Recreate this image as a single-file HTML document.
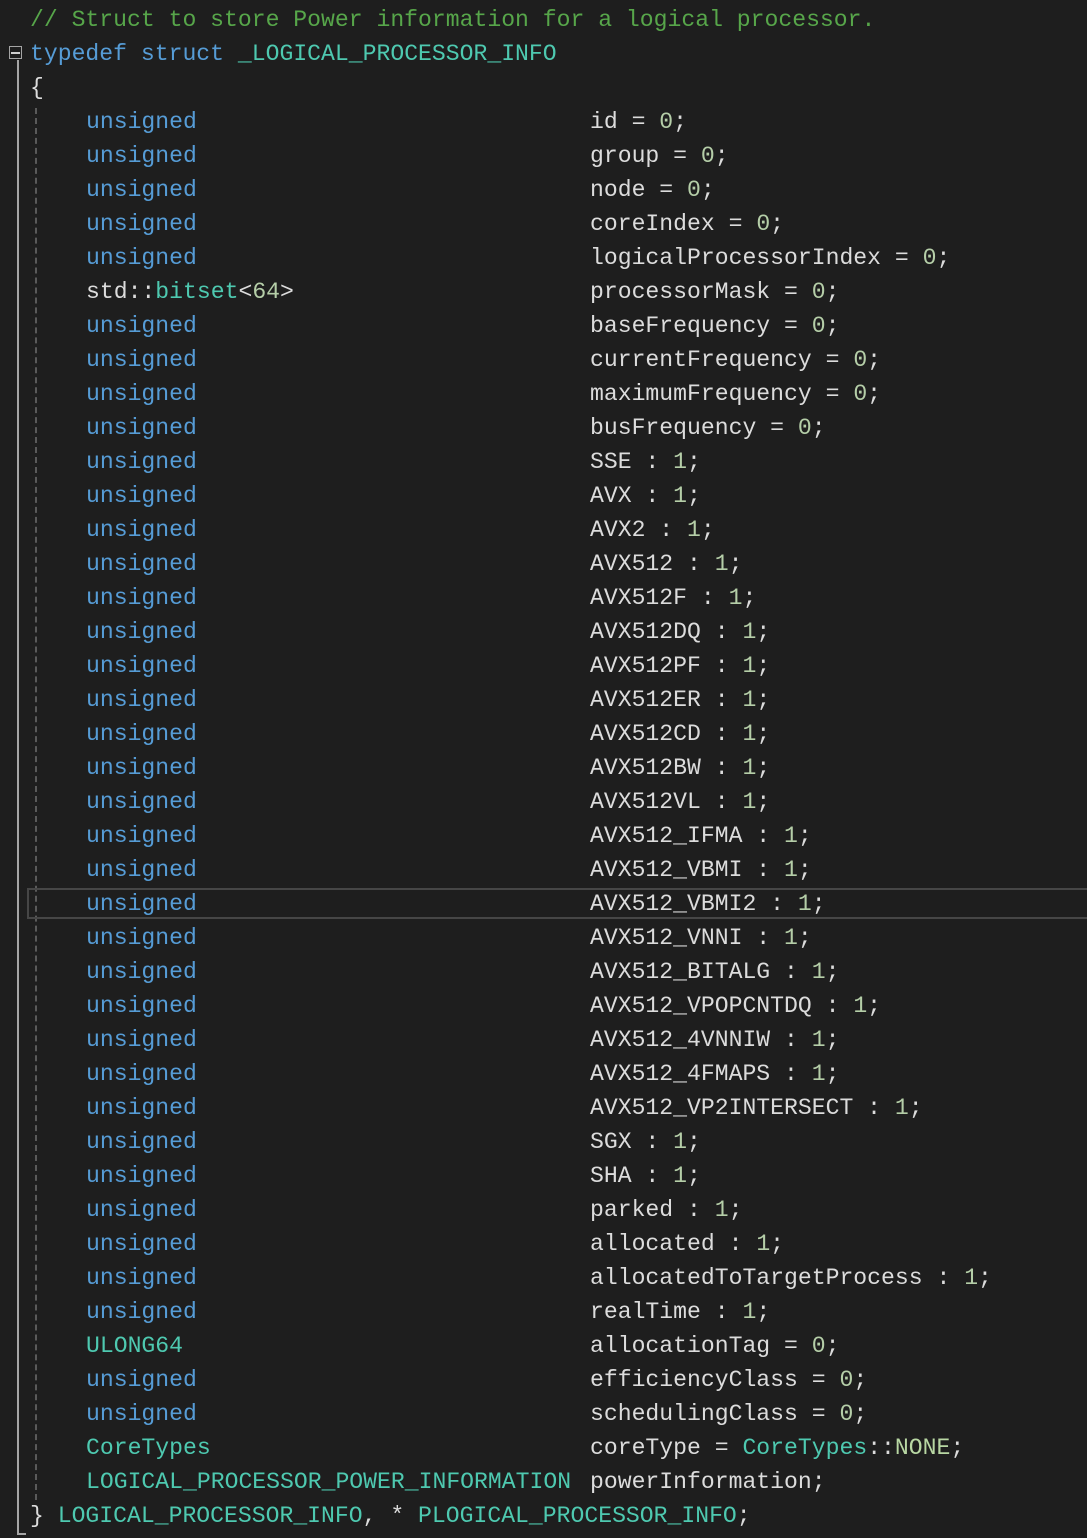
<!DOCTYPE html>
<html><head><meta charset="utf-8"><style>
html,body{margin:0;padding:0;background:#1e1e1e;width:1087px;height:1538px;overflow:hidden}
body{position:relative;font-family:"Liberation Mono",monospace;font-size:23.1px;color:#dcdcdc}
.r{position:absolute;left:0;width:1087px;height:34px;line-height:34px;white-space:pre}
.a{position:absolute;left:86px;top:0}
.b{position:absolute;left:590px;top:0}
.k{color:#569cd6}.t{color:#4ec9b0}.n{color:#b5cea8}.c{color:#57a64a}.e{color:#b8d7a3}
</style></head><body>
<div style="position:absolute;left:9px;top:46px;width:13px;height:13px;border:1px solid #a5a5a5;box-sizing:border-box"></div>
<div style="position:absolute;left:11px;top:52px;width:9px;height:2px;background:#d0d0d0"></div>
<div style="position:absolute;left:17px;top:60px;width:2px;height:1475px;background:#a5a5a5"></div>
<div style="position:absolute;left:17px;top:1533px;width:9px;height:2px;background:#a5a5a5"></div>
<div style="position:absolute;left:35px;top:108px;width:0;height:1392px;border-left:2px dashed #5a5a5a"></div>
<div style="position:absolute;left:27px;top:888px;width:1070px;height:31px;border:2px solid #464646;box-sizing:border-box"></div>

<div class="r c" style="top:3px;left:30px">// Struct to store Power information for a logical processor.</div>
<div class="r" style="top:37px;left:30px"><span class="k">typedef struct</span> <span class="t">_LOGICAL_PROCESSOR_INFO</span></div>
<div class="r" style="top:71px;left:30px">{</div>

<div class="r" style="top:105px"><span class="a k">unsigned</span><span class="b">id = <span class="n">0</span>;</span></div>
<div class="r" style="top:139px"><span class="a k">unsigned</span><span class="b">group = <span class="n">0</span>;</span></div>
<div class="r" style="top:173px"><span class="a k">unsigned</span><span class="b">node = <span class="n">0</span>;</span></div>
<div class="r" style="top:207px"><span class="a k">unsigned</span><span class="b">coreIndex = <span class="n">0</span>;</span></div>
<div class="r" style="top:241px"><span class="a k">unsigned</span><span class="b">logicalProcessorIndex = <span class="n">0</span>;</span></div>
<div class="r" style="top:275px"><span class="a">std::<span class="t">bitset</span>&lt;<span class="n">64</span>&gt;</span><span class="b">processorMask = <span class="n">0</span>;</span></div>
<div class="r" style="top:309px"><span class="a k">unsigned</span><span class="b">baseFrequency = <span class="n">0</span>;</span></div>
<div class="r" style="top:343px"><span class="a k">unsigned</span><span class="b">currentFrequency = <span class="n">0</span>;</span></div>
<div class="r" style="top:377px"><span class="a k">unsigned</span><span class="b">maximumFrequency = <span class="n">0</span>;</span></div>
<div class="r" style="top:411px"><span class="a k">unsigned</span><span class="b">busFrequency = <span class="n">0</span>;</span></div>
<div class="r" style="top:445px"><span class="a k">unsigned</span><span class="b">SSE : <span class="n">1</span>;</span></div>
<div class="r" style="top:479px"><span class="a k">unsigned</span><span class="b">AVX : <span class="n">1</span>;</span></div>
<div class="r" style="top:513px"><span class="a k">unsigned</span><span class="b">AVX2 : <span class="n">1</span>;</span></div>
<div class="r" style="top:547px"><span class="a k">unsigned</span><span class="b">AVX512 : <span class="n">1</span>;</span></div>
<div class="r" style="top:581px"><span class="a k">unsigned</span><span class="b">AVX512F : <span class="n">1</span>;</span></div>
<div class="r" style="top:615px"><span class="a k">unsigned</span><span class="b">AVX512DQ : <span class="n">1</span>;</span></div>
<div class="r" style="top:649px"><span class="a k">unsigned</span><span class="b">AVX512PF : <span class="n">1</span>;</span></div>
<div class="r" style="top:683px"><span class="a k">unsigned</span><span class="b">AVX512ER : <span class="n">1</span>;</span></div>
<div class="r" style="top:717px"><span class="a k">unsigned</span><span class="b">AVX512CD : <span class="n">1</span>;</span></div>
<div class="r" style="top:751px"><span class="a k">unsigned</span><span class="b">AVX512BW : <span class="n">1</span>;</span></div>
<div class="r" style="top:785px"><span class="a k">unsigned</span><span class="b">AVX512VL : <span class="n">1</span>;</span></div>
<div class="r" style="top:819px"><span class="a k">unsigned</span><span class="b">AVX512_IFMA : <span class="n">1</span>;</span></div>
<div class="r" style="top:853px"><span class="a k">unsigned</span><span class="b">AVX512_VBMI : <span class="n">1</span>;</span></div>
<div class="r" style="top:887px"><span class="a k">unsigned</span><span class="b">AVX512_VBMI2 : <span class="n">1</span>;</span></div>
<div class="r" style="top:921px"><span class="a k">unsigned</span><span class="b">AVX512_VNNI : <span class="n">1</span>;</span></div>
<div class="r" style="top:955px"><span class="a k">unsigned</span><span class="b">AVX512_BITALG : <span class="n">1</span>;</span></div>
<div class="r" style="top:989px"><span class="a k">unsigned</span><span class="b">AVX512_VPOPCNTDQ : <span class="n">1</span>;</span></div>
<div class="r" style="top:1023px"><span class="a k">unsigned</span><span class="b">AVX512_4VNNIW : <span class="n">1</span>;</span></div>
<div class="r" style="top:1057px"><span class="a k">unsigned</span><span class="b">AVX512_4FMAPS : <span class="n">1</span>;</span></div>
<div class="r" style="top:1091px"><span class="a k">unsigned</span><span class="b">AVX512_VP2INTERSECT : <span class="n">1</span>;</span></div>
<div class="r" style="top:1125px"><span class="a k">unsigned</span><span class="b">SGX : <span class="n">1</span>;</span></div>
<div class="r" style="top:1159px"><span class="a k">unsigned</span><span class="b">SHA : <span class="n">1</span>;</span></div>
<div class="r" style="top:1193px"><span class="a k">unsigned</span><span class="b">parked : <span class="n">1</span>;</span></div>
<div class="r" style="top:1227px"><span class="a k">unsigned</span><span class="b">allocated : <span class="n">1</span>;</span></div>
<div class="r" style="top:1261px"><span class="a k">unsigned</span><span class="b">allocatedToTargetProcess : <span class="n">1</span>;</span></div>
<div class="r" style="top:1295px"><span class="a k">unsigned</span><span class="b">realTime : <span class="n">1</span>;</span></div>
<div class="r" style="top:1329px"><span class="a t">ULONG64</span><span class="b">allocationTag = <span class="n">0</span>;</span></div>
<div class="r" style="top:1363px"><span class="a k">unsigned</span><span class="b">efficiencyClass = <span class="n">0</span>;</span></div>
<div class="r" style="top:1397px"><span class="a k">unsigned</span><span class="b">schedulingClass = <span class="n">0</span>;</span></div>
<div class="r" style="top:1431px"><span class="a t">CoreTypes</span><span class="b">coreType = <span class="t">CoreTypes</span>::<span class="e">NONE</span>;</span></div>
<div class="r" style="top:1465px"><span class="a t">LOGICAL_PROCESSOR_POWER_INFORMATION</span><span class="b">powerInformation;</span></div>
<div class="r" style="top:1499px;left:30px">} <span class="t">LOGICAL_PROCESSOR_INFO</span>, * <span class="t">PLOGICAL_PROCESSOR_INFO</span>;</div>
</body></html>
